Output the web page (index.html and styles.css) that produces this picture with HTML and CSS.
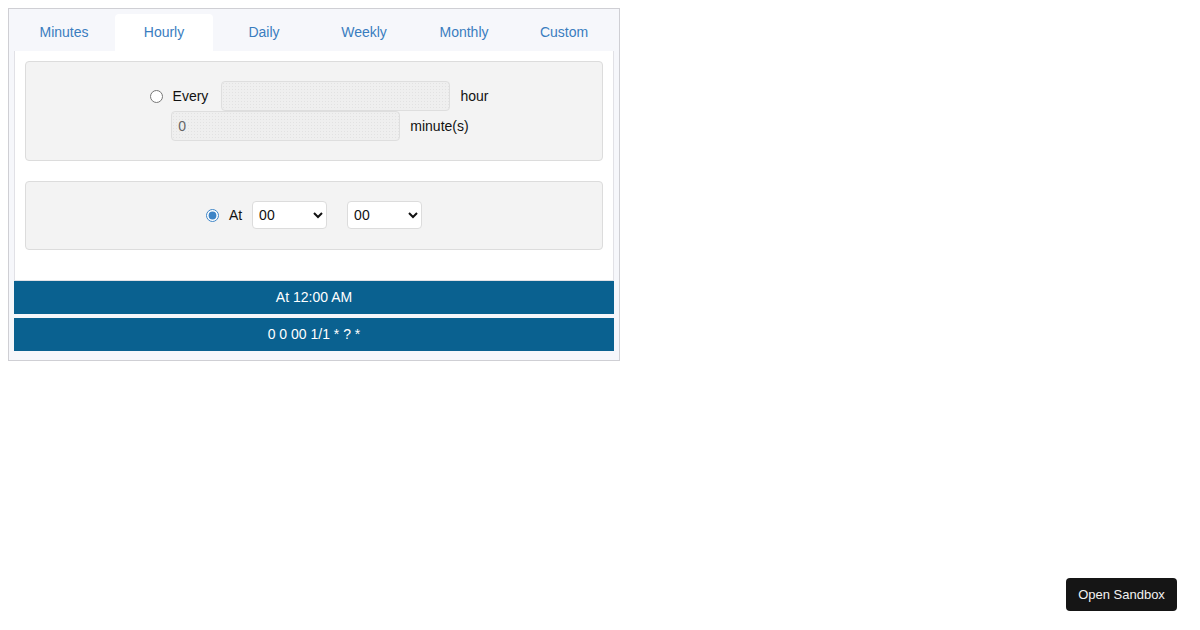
FILE: index.html
```html
<!DOCTYPE html>
<html>
<head>
<meta charset="utf-8">
<link rel="stylesheet" href="styles.css">
</head>
<body>
<div class="cron">
  <ul class="tabs">
    <li class="tab">Minutes</li>
    <li class="tab active">Hourly</li>
    <li class="tab">Daily</li>
    <li class="tab">Weekly</li>
    <li class="tab">Monthly</li>
    <li class="tab">Custom</li>
  </ul>
  <div class="panel">
    <div class="well well-every">
      <div class="line">
        <input type="radio" name="hourly" class="radio">
        <span class="lbl">Every</span>
        <input type="text" class="field field-hour" disabled>
        <span class="lbl">hour</span>
      </div>
      <div class="line line-min">
        <input type="text" class="field field-min" value="0" disabled>
        <span class="lbl">minute(s)</span>
      </div>
    </div>
    <div class="well well-at">
      <div class="line">
        <input type="radio" name="hourly" class="radio" checked>
        <span class="lbl">At</span>
        <select class="sel"><option>00</option></select>
        <select class="sel sel-2"><option>00</option></select>
      </div>
    </div>
  </div>
  <div class="bar">At 12:00 AM</div>
  <div class="bar">0 0 00 1/1 * ? *</div>
</div>
<button class="sandbox">Open Sandbox</button>
</body>
</html>
```
FILE: styles.css
```css
html, body {
  margin: 0;
  padding: 0;
  background: #ffffff;
}
body {
  padding: 8px;
  font-family: "Liberation Sans", Arial, sans-serif;
  font-size: 14px;
  color: #111;
}
.cron {
  width: 600px;
  border: 1px solid #cfcfd4;
  background: #f6f7fb;
  padding: 5px 5px 9px 5px;
}
.tabs {
  list-style: none;
  margin: 0;
  padding: 0;
  display: flex;
  height: 37px;
}
.tab {
  width: 100px;
  display: flex;
  align-items: center;
  justify-content: center;
  color: #3a7dbf;
  font-size: 14px;
  border-radius: 4px 4px 0 0;
  padding-bottom: 2px;
  box-sizing: border-box;
}
.tab.active {
  background: #ffffff;
  margin: 0 1px;
  width: 98px;
}
.panel {
  background: #ffffff;
  border: 1px solid #e1e1e6;
  border-top: none;
  padding: 10px 10px 30px 10px;
}
.well {
  background: #f3f3f3;
  border: 1px solid #dcdcdc;
  border-radius: 4px;
  text-align: center;
}
.well-every {
  padding: 19px 0 19px 10px;
}
.well-at {
  margin-top: 20px;
  padding: 19px 0 20px 0;
}
.line {
  display: flex;
  justify-content: center;
  align-items: center;
}
.line-min {
  padding-left: 2px;
}
.radio {
  margin: 0 10px 0 0;
  width: 13px;
  height: 13px;
  accent-color: #3d84c6;
}
.lbl {
  font-size: 14px;
  color: #111;
}
.field {
  box-sizing: border-box;
  height: 30px;
  border: 1px solid #dedede;
  border-radius: 4px;
  background-color: #efefef;
  background-image: radial-gradient(#e2e2e2 0.6px, transparent 0.7px);
  background-size: 3px 3px;
  font-family: "Liberation Sans", Arial, sans-serif;
  font-size: 14px;
  color: #666;
  padding: 0 6px;
}
.field-hour {
  width: 229px;
  margin: 0 10px 0 13px;
}
.field-min {
  width: 229px;
  margin: 0 10px 0 0;
}
.sel {
  box-sizing: border-box;
  width: 75px;
  height: 28px;
  margin-left: 10px;
  border: 1px solid #dcdcdc;
  border-radius: 4px;
  background: #ffffff;
  font-family: "Liberation Sans", Arial, sans-serif;
  font-size: 14px;
  color: #111;
  padding: 0 2px;
}
.sel-2 {
  margin-left: 20px;
}
.bar {
  background: #0a6190;
  color: #ffffff;
  height: 33px;
  display: flex;
  align-items: center;
  justify-content: center;
  font-size: 14px;
  padding-bottom: 2px;
  box-sizing: border-box;
}
.bar + .bar {
  margin-top: 4px;
}
.sandbox {
  position: fixed;
  right: 23px;
  bottom: 19px;
  width: 111px;
  height: 33px;
  background: #151515;
  color: #f2f2f2;
  border: none;
  border-radius: 4px;
  font-family: "Liberation Sans", Arial, sans-serif;
  font-size: 13px;
  padding: 0;
}
```
